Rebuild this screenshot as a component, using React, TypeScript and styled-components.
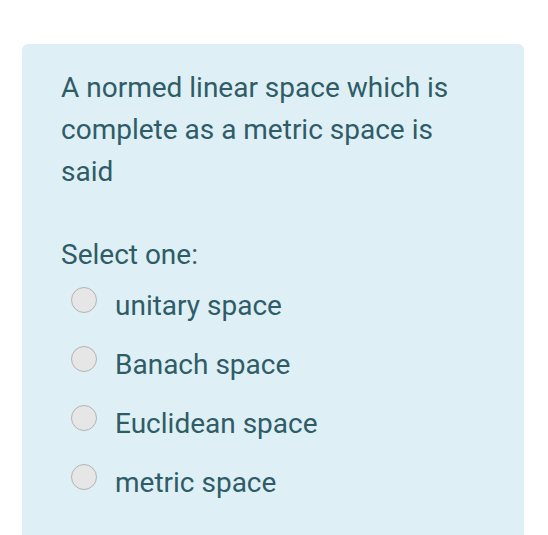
import React from "react";
import styled, { createGlobalStyle } from "styled-components";

const GlobalStyle = createGlobalStyle`
  html, body {
    margin: 0;
    padding: 0;
    background: #ffffff;
    width: 548px;
    height: 535px;
    overflow: hidden;
  }
`;

const Page = styled.div`
  padding: 44px 24px 0 22px;
  font-family: Roboto, "Noto Sans", sans-serif;
`;

const Card = styled.div`
  box-sizing: border-box;
  height: 491px;
  background: #def0f6;
  border-radius: 6px 6px 0 0;
  padding: 23px 60px 0 39px;
  color: #2f5c66;
`;

const Question = styled.p`
  margin: 0;
  font-size: 28px;
  line-height: 42px;
`;

const Prompt = styled.div`
  margin-top: 41px;
  font-size: 28px;
  line-height: 42px;
`;

const Options = styled.div`
  display: flex;
  flex-direction: column;
  gap: 17px;
  margin-top: 8px;
  padding-left: 10px;
`;

const Option = styled.label`
  display: flex;
  align-items: center;
  height: 42px;
  font-size: 28px;
  gap: 18px;
  white-space: nowrap;
`;

const Radio = styled.span`
  flex: none;
  width: 24px;
  height: 24px;
  border-radius: 50%;
  border: 1px solid #b3b3b3;
  background: #e6e6e6;
  margin-top: -10px;
`;

const options = ["unitary space", "Banach space", "Euclidean space", "metric space"];

export default function App() {
  return (
    <Page>
      <GlobalStyle />
      <Card>
        <Question>A normed linear space which is complete as a metric space is said</Question>
        <Prompt>Select one:</Prompt>
        <Options>
          {options.map((o) => (
            <Option key={o}>
              <Radio />
              <span>{o}</span>
            </Option>
          ))}
        </Options>
      </Card>
    </Page>
  );
}
